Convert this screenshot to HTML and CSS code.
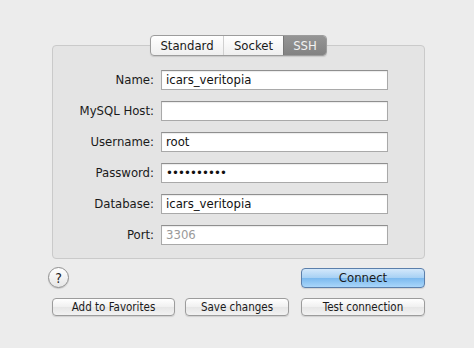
FILE: index.html
```html
<!DOCTYPE html>
<html lang="en">
<head>
  <meta charset="UTF-8">
  <title>Connection</title>
  <link rel="stylesheet" href="styles.css">
</head>
<body>
  <div class="window">
    <div class="group">
      <div class="tabs">
        <span class="tab">Standard</span>
        <span class="tab">Socket</span>
        <span class="tab selected">SSH</span>
      </div>

      <div class="form">
        <label class="label">Name:</label>
        <div class="field">icars_veritopia</div>

        <label class="label">MySQL Host:</label>
        <div class="field"></div>

        <label class="label">Username:</label>
        <div class="field">root</div>

        <label class="label">Password:</label>
        <div class="field password">&bull;&bull;&bull;&bull;&bull;&bull;&bull;&bull;&bull;&bull;</div>

        <label class="label">Database:</label>
        <div class="field">icars_veritopia</div>

        <label class="label">Port:</label>
        <div class="field placeholder">3306</div>
      </div>
    </div>

    <div class="actions">
      <span class="help">?</span>
      <button class="btn primary">Connect</button>
    </div>

    <div class="buttons">
      <button class="btn fav">Add to Favorites</button>
      <button class="btn save">Save changes</button>
      <button class="btn test">Test connection</button>
    </div>
  </div>
</body>
</html>
```

FILE: styles.css
```css
html, body {
  margin: 0;
  height: 100%;
}
body {
  font-family: "DejaVu Sans Condensed", "DejaVu Sans", sans-serif;
  font-size: 13px;
  color: #111;
  background: #ececec;
}
.window {
  padding: 45px 49px 0 52px;
}
.group {
  width: 371px;
  border: 1px solid #cacaca;
  border-radius: 4px;
  background: #e4e4e4;
  padding-bottom: 13px;
}
.tabs {
  display: flex;
  width: 175px;
  height: 19px;
  margin: -11px auto 0;
  border: 1px solid #9c9c9c;
  border-radius: 4px;
  overflow: hidden;
  background: linear-gradient(#ffffff, #efefef);
  box-shadow: 0 1px 1px rgba(0,0,0,0.12);
}
.tab {
  display: flex;
  align-items: center;
  justify-content: center;
  font-size: 13px;
  color: #1a1a1a;
}
.tab:nth-child(1) {
  width: 72px;
  border-right: 1px solid #d0d0d0;
}
.tab:nth-child(2) {
  width: 59px;
}
.tab.selected {
  flex: 1;
  color: #f2f2f2;
  background: linear-gradient(#959595, #828282);
  border-left: 1px solid #777;
}
.form {
  display: grid;
  grid-template-columns: 101px 227px;
  column-gap: 7px;
  row-gap: 11px;
  margin-top: 14px;
}
.label {
  text-align: right;
  line-height: 20px;
  color: #1a1a1a;
}
.field {
  height: 18px;
  line-height: 18px;
  border: 1px solid #a9a9a9;
  border-top-color: #8f8f8f;
  background: #fff;
  padding-left: 4px;
  box-shadow: inset 0 1px 1px rgba(0,0,0,0.08);
}
.password {
  font-size: 13px;
  letter-spacing: -0.9px;
}
.placeholder {
  color: #9a9a9a;
}
.actions {
  display: flex;
  justify-content: space-between;
  align-items: center;
  margin-top: 8px;
  margin-left: -4px;
}
.help {
  width: 19px;
  height: 19px;
  border: 1px solid #8f8f8f;
  border-radius: 50%;
  background: linear-gradient(#ffffff, #e6e6e6);
  display: flex;
  align-items: center;
  justify-content: center;
  font-size: 14px;
  color: #222;
  box-shadow: 0 1px 1px rgba(0,0,0,0.15);
}
.btn {
  font-family: "DejaVu Sans Condensed", "DejaVu Sans", sans-serif;
  font-size: 11.5px;
  color: #1a1a1a;
  height: 18px;
  padding: 0;
  border: 1px solid #9c9c9c;
  border-radius: 4px;
  background: linear-gradient(#ffffff, #f0f0f0 50%, #e6e6e6 51%, #f2f2f2);
  box-shadow: 0 1px 1px rgba(0,0,0,0.12);
}
.primary {
  width: 124px;
  height: 20px;
  font-size: 13px;
  border-color: #5b7fab;
  background: linear-gradient(#d3e8fb, #a6d0f4 50%, #7bb9ee 51%, #a9d6fa);
}
.buttons {
  display: flex;
  margin-top: 10px;
}
.fav {
  width: 123px;
}
.save {
  width: 104px;
  margin-left: 10px;
}
.test {
  width: 124px;
  margin-left: 12px;
}
```
